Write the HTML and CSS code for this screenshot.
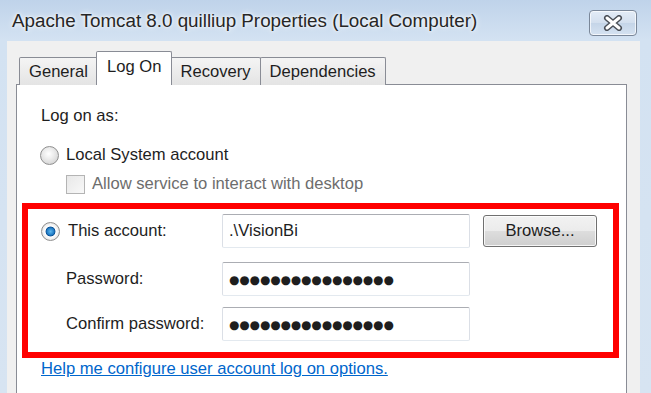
FILE: index.html
```html
<!DOCTYPE html>
<html lang="en">
<head>
    <meta charset="UTF-8">
    <title>Apache Tomcat 8.0 quilliup Properties (Local Computer)</title>
    <link rel="stylesheet" href="styles.css">
</head>
<body>
    <div class="window">
        <div class="titlebar">
            <span class="title">Apache Tomcat 8.0 quilliup Properties (Local Computer)</span>
            <button class="close" type="button" aria-label="Close">
                <svg width="22" height="16" viewBox="0 0 22 16">
                    <path d="M5 3 L17 13 M17 3 L5 13" stroke="#4a4f57" stroke-width="6" stroke-linecap="round"/>
                    <path d="M5 3 L17 13 M17 3 L5 13" stroke="#ffffff" stroke-width="3" stroke-linecap="round"/>
                </svg>
            </button>
        </div>

        <div class="panel">
            <div class="tabs">
                <div class="tab">General</div>
                <div class="tab active">Log On</div>
                <div class="tab">Recovery</div>
                <div class="tab">Dependencies</div>
            </div>

            <div class="page">
                <p class="heading">Log on as:</p>

                <div class="option">
                    <span class="radio"></span>
                    <span>Local System account</span>
                </div>
                <div class="check-row">
                    <span class="checkbox"></span>
                    <span>Allow service to interact with desktop</span>
                </div>

                <div class="highlight">
                    <div class="field-row">
                        <div class="field-label">
                            <span class="radio checked"></span>
                            <span>This account:</span>
                        </div>
                        <div class="textbox">.\VisionBi</div>
                        <button class="btn" type="button">Browse...</button>
                    </div>
                    <div class="field-row second">
                        <div class="field-label indent">Password:</div>
                        <div class="textbox"><span class="dots">●●●●●●●●●●●●●●●●</span></div>
                    </div>
                    <div class="field-row third">
                        <div class="field-label indent">Confirm password:</div>
                        <div class="textbox"><span class="dots">●●●●●●●●●●●●●●●●</span></div>
                    </div>
                </div>

                <a class="help" href="#">Help me configure user account log on options.</a>
            </div>
        </div>
    </div>
</body>
</html>
```

FILE: styles.css
```css
:root {
    --frame: #d7e4f2;
    --panel: #f0f0f0;
    --tab-border: #898c95;
    --text: #1e1e1e;
    --red: #ff0000;
}
body {
    margin: 0;
    font-family: 'Liberation Sans', Arial, sans-serif;
    font-size: 16.6px;
    color: var(--text);
    overflow: hidden;
}
.window {
    width: 651px;
    height: 393px;
    background: linear-gradient(to bottom, #bfd3ea 0, #d3e2f2 40px, var(--frame) 100%);
    overflow: hidden;
}
.titlebar {
    height: 41px;
    display: flex;
    align-items: flex-start;
    justify-content: space-between;
}
.title {
    margin: 10px 0 0 12px;
    font-size: 18.8px;
    line-height: 22px;
    color: #262626;
    text-shadow: 0 0 6px #ffffff, 0 0 3px #ffffff;
}
.close {
    margin: 10px 14px 0 0;
    width: 48px;
    height: 26px;
    padding: 0;
    border: 1px solid #7a8799;
    border-radius: 4px;
    background: linear-gradient(to bottom, #e3ecf7 0%, #d3dfee 50%, #c5d5e8 51%, #d5e2f1 100%);
    box-shadow: inset 0 0 0 1px rgba(255, 255, 255, 0.7);
    display: flex;
    align-items: center;
    justify-content: center;
}
.panel {
    margin: 0 11px 0 7px;
    height: 352px;
    background: var(--panel);
    padding: 10px 13px 0 9px;
}
.tabs {
    display: flex;
    align-items: flex-end;
    margin-left: 4px;
    position: relative;
    z-index: 1;
    margin-bottom: -1px;
}
.tab {
    height: 27px;
    line-height: 28px;
    padding: 0 9px;
    border: 1px solid var(--tab-border);
    border-bottom: none;
    border-radius: 2px 2px 0 0;
    background: linear-gradient(to bottom, #f4f4f4, #e4e4e4);
    margin-left: -1px;
}
.tab.active {
    height: 33px;
    line-height: 30px;
    padding: 0 10px;
    background: #ffffff;
    margin: 0 -1px 0 -2px;
    position: relative;
    z-index: 2;
}
.page {
    background: #ffffff;
    border: 1px solid var(--tab-border);
    height: 340px;
    padding: 21px 7px 0 5px;
}
.heading {
    margin: 0 0 0 19px;
    line-height: 20px;
}
.option, .check-row {
    display: flex;
    align-items: center;
    line-height: 20px;
}
.option {
    margin: 19px 0 0 18px;
    gap: 7px;
}
.check-row {
    margin: 9px 0 0 44px;
    gap: 7px;
    color: #6d6d6d;
}
.radio {
    width: 17px;
    height: 17px;
    border-radius: 50%;
    border: 1px solid #8f8f8f;
    background: radial-gradient(circle at 45% 40%, #ffffff 0, #eeeeee 35%, #c9c9c9 100%);
    flex: none;
}
.radio.checked {
    background: radial-gradient(circle at 50% 50%, #5fb8ee 0, #1f7ac4 30%, #0b4d8f 38%, #ffffff 44%, #e9e9e9 70%, #c4c4c4 100%);
}
.checkbox {
    width: 17px;
    height: 17px;
    border: 1px solid #b4b4b4;
    background: linear-gradient(135deg, #e8e8e8, #f8f8f8);
    flex: none;
}
.highlight {
    margin-top: 9px;
    border: 6px solid var(--red);
    height: 138px;
    padding: 5px 0 0 13px;
}
.field-row {
    display: flex;
    align-items: center;
    height: 34px;
}
.field-row.second {
    margin-top: 14px;
}
.field-row.third {
    margin-top: 11px;
}
.field-label {
    width: 181px;
    display: flex;
    align-items: center;
    gap: 8px;
}
.field-label.indent {
    padding-left: 25px;
    width: 156px;
}
.textbox {
    width: 236px;
    height: 32px;
    border: 1px solid #dbdfe6;
    border-top-color: #abadb3;
    border-bottom-color: #e3e9ef;
    border-radius: 2px;
    padding: 0 4px 0 6px;
    line-height: 32px;
}
.dots {
    font-family: 'DejaVu Sans', sans-serif;
    font-size: 11.8px;
    letter-spacing: 0;
}
.btn {
    margin-left: 13px;
    width: 114px;
    height: 32px;
    border: 1px solid #707070;
    border-radius: 3px;
    background: linear-gradient(to bottom, #f2f2f2 0%, #ebebeb 50%, #dddddd 51%, #cfcfcf 100%);
    box-shadow: inset 0 0 0 1px rgba(255, 255, 255, 0.8);
    font-family: inherit;
    font-size: 16.6px;
    color: var(--text);
    padding: 0;
}
.help {
    display: inline-block;
    margin: 1px 0 0 19px;
    color: #0066cc;
    line-height: 20px;
}
```
